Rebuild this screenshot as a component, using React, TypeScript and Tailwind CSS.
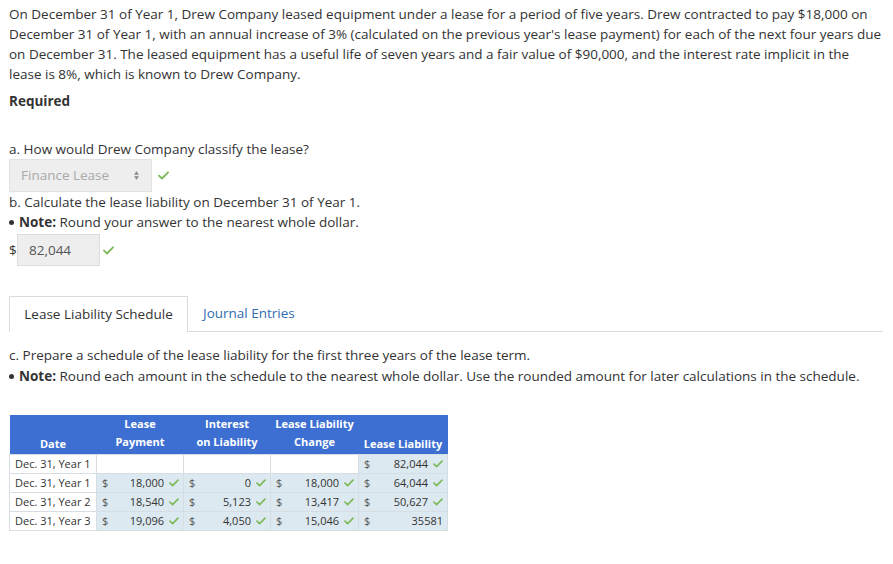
import React from 'react'

function Check({ className = '' }: { className?: string }) {
    return (
        <svg viewBox="0 0 12 10" className={`inline-block w-[10px] h-[8px] ${className}`}>
            <path d="M1 5.2 L4.3 8.3 L11 1.5" fill="none" stroke="#7dba5c" strokeWidth="2.1" strokeLinecap="round" strokeLinejoin="round" />
        </svg>
    )
}

function Bullet() {
    return <span className="inline-block w-[5px] h-[5px] rounded-full bg-[#333] align-middle mr-[5px] mb-[2px]" />
}

type Cell = { v: string; ok: boolean } | null

const rows: { date: string; cells: Cell[]; shaded: boolean }[] = [
    { date: 'Dec. 31, Year 1', cells: [null, null, null, { v: '82,044', ok: true }], shaded: false },
    { date: 'Dec. 31, Year 1', cells: [{ v: '18,000', ok: true }, { v: '0', ok: true }, { v: '18,000', ok: true }, { v: '64,044', ok: true }], shaded: true },
    { date: 'Dec. 31, Year 2', cells: [{ v: '18,540', ok: true }, { v: '5,123', ok: true }, { v: '13,417', ok: true }, { v: '50,627', ok: true }], shaded: true },
    { date: 'Dec. 31, Year 3', cells: [{ v: '19,096', ok: true }, { v: '4,050', ok: true }, { v: '15,046', ok: true }, { v: '35581', ok: false }], shaded: true },
]

function MoneyCell({ cell, shaded }: { cell: Cell; shaded: boolean }) {
    if (!cell) {
        return <td className={`border border-[#d6dde3] h-[19px] ${shaded ? 'bg-[#dde9f0]' : 'bg-white'}`} />
    }
    return (
        <td className="border border-[#d6dde3] bg-[#dde9f0] h-[19px] p-0">
            <div className="flex items-center pl-[5px] pr-[4px]">
                <span className="text-[#555]">$</span>
                <span className="flex-1 text-right">{cell.v}</span>
                {cell.ok && <span className="w-[15px] flex justify-end"><Check /></span>}
            </div>
        </td>
    )
}

export default function App() {
    return (
        <div className="w-[893px] h-[564px] bg-white text-[#333] pl-[9px] pr-[4px] pt-[4px] text-[13.5px]" style={{ fontFamily: '"Open Sans", sans-serif' }}>
            <p className="leading-[20px] m-0 w-[873px]">
                On December 31 of Year 1, Drew Company leased equipment under a lease for a period of five years. Drew contracted to pay $18,000 on
                December 31 of Year 1, with an annual increase of 3% (calculated on the previous year's lease payment) for each of the next four years due
                on December 31. The leased equipment has a useful life of seven years and a fair value of $90,000, and the interest rate implicit in the
                lease is 8%, which is known to Drew Company.
            </p>
            <p className="leading-[20px] font-bold mt-[7px]">Required</p>

            <p className="leading-[20px] mt-[28px]">a. How would Drew Company classify the lease?</p>
            <div className="flex items-center gap-[6px] mt-0">
                <div className="w-[143px] h-[33px] bg-[#eeeeee] border border-[#e2e2e2] flex items-center justify-between pl-[11px] pr-[12px]">
                    <span className="text-[#a9a9a9]">Finance Lease</span>
                    <svg viewBox="0 0 6 10" className="w-[5px] h-[9px]">
                        <path d="M3 0 L6 4 L0 4 Z M3 10 L6 6 L0 6 Z" fill="#888" />
                    </svg>
                </div>
                <Check className="w-[11px] h-[9px]" />
            </div>

            <p className="leading-[20px] mt-0">b. Calculate the lease liability on December 31 of Year 1.</p>
            <p className="leading-[20px]">
                <Bullet /><span className="font-bold">Note:</span> Round your answer to the nearest whole dollar.
            </p>
            <div className="flex items-center mt-[2px]">
                <span className="w-[8px]">$</span>
                <div className="w-[83px] h-[32px] bg-[#eeeeee] border border-[#dcdcdc] flex items-center pl-[11px]">
                    <span className="text-[#555]">82,044</span>
                </div>
                <Check className="ml-[3px] w-[11px] h-[9px]" />
            </div>

            <div className="mt-[30px] flex border-b border-[#dcdcdc] w-[874px] h-[36px]">
                <div className="w-[179px] h-[36px] border border-b-0 border-[#dcdcdc] bg-white -mb-px flex items-center justify-center text-[#333]">
                    Lease Liability Schedule
                </div>
                <div className="px-[15px] flex items-center text-[#2f6db0]">Journal Entries</div>
            </div>

            <p className="leading-[20px] mt-[13px]">c. Prepare a schedule of the lease liability for the first three years of the lease term.</p>
            <p className="leading-[20px] mt-[1px]">
                <Bullet /><span className="font-bold">Note:</span> Round each amount in the schedule to the nearest whole dollar. Use the rounded amount for later calculations in the schedule.
            </p>

            <table className="mt-[29px] border-collapse text-[11px] leading-[14px] text-[#333] w-[438px] table-fixed">
                <colgroup>
                    <col className="w-[87px]" />
                    <col className="w-[87px]" />
                    <col className="w-[87px]" />
                    <col className="w-[88px]" />
                    <col className="w-[89px]" />
                </colgroup>
                <thead>
                    <tr className="bg-[#3d6fd2] text-white font-extrabold">
                        <th className="h-[37px] align-bottom pb-[3px] text-center">Date</th>
                        <th className="h-[37px] align-bottom pb-[3px] text-center leading-[18px]">Lease<br />Payment</th>
                        <th className="h-[37px] align-bottom pb-[3px] text-center leading-[18px]">Interest<br />on Liability</th>
                        <th className="h-[37px] align-bottom pb-[3px] text-center leading-[18px]">Lease Liability<br />Change</th>
                        <th className="h-[37px] align-bottom pb-[3px] text-center">Lease Liability</th>
                    </tr>
                </thead>
                <tbody>
                    {rows.map((r, i) => (
                        <tr key={i}>
                            <td className="border border-[#d6dde3] bg-white h-[19px] pl-[5px] whitespace-nowrap">{r.date}</td>
                            {r.cells.map((c, j) => (
                                <MoneyCell key={j} cell={c} shaded={r.shaded} />
                            ))}
                        </tr>
                    ))}
                </tbody>
            </table>
        </div>
    )
}
